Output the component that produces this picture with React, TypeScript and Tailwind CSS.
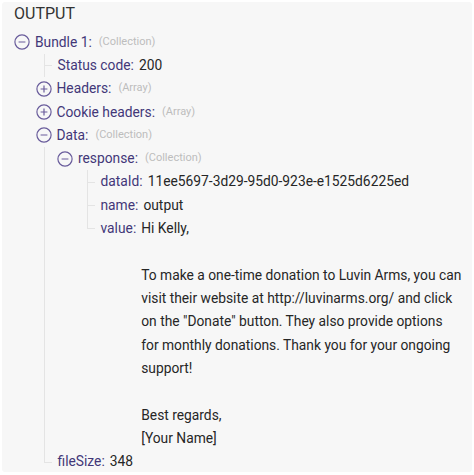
type Node = {
  key: string;
  type?: string;
  value?: string;
  children?: Node[];
};

const message = `Hi Kelly,

To make a one-time donation to Luvin Arms, you can
visit their website at http://luvinarms.org/ and click
on the "Donate" button. They also provide options
for monthly donations. Thank you for your ongoing
support!

Best regards,
[Your Name]`;

const bundle: Node = {
  key: "Bundle 1",
  type: "(Collection)",
  children: [
    { key: "Status code", value: "200" },
    { key: "Headers", type: "(Array)", children: [] },
    { key: "Cookie headers", type: "(Array)", children: [] },
    {
      key: "Data",
      type: "(Collection)",
      children: [
        {
          key: "response",
          type: "(Collection)",
          children: [
            { key: "dataId", value: "11ee5697-3d29-95d0-923e-e1525d6225ed" },
            { key: "name", value: "output" },
            { key: "value", value: message },
          ],
        },
      ],
    },
    { key: "fileSize", value: "348" },
  ],
};

function Toggle({ open }: { open: boolean }) {
  return (
    <svg width="16" height="16" viewBox="0 0 16 16" className="-ml-[8px] mr-[5px] shrink-0">
      <circle cx="8" cy="8" r="7.1" fill="#f7f7f7" stroke="#6a5d9c" strokeWidth="1.2" />
      <line x1="4.6" y1="8" x2="11.4" y2="8" stroke="#6a5d9c" strokeWidth="1.2" />
      {!open && <line x1="8" y1="4.6" x2="8" y2="11.4" stroke="#6a5d9c" strokeWidth="1.2" />}
    </svg>
  );
}

function TreeNode({ node, last, root }: { node: Node; last: boolean; root?: boolean }) {
  const branch = node.children !== undefined;
  const open = branch && node.children!.length > 0;

  if (!branch) {
    return (
      <div className="relative">
        {!root && (
          <>
            <span className={`absolute left-0 top-0 w-px bg-[#e4e4e4] ${last ? "h-[12px]" : "h-full"}`} />
            <span className="absolute left-0 top-[11.5px] h-px w-[8px] bg-[#e4e4e4]" />
          </>
        )}
        <div className="flex items-start gap-[5px] pl-[14px] leading-[23.33px]">
          <span className="shrink-0 text-[#433779]">{node.key}:</span>
          <span className="flex-1 whitespace-pre-line text-[#262626]">{node.value}</span>
        </div>
      </div>
    );
  }

  return (
    <div>
      <div className="flex h-[23.33px] items-center">
        <Toggle open={open} />
        <span className="text-[#433779]">{node.key}:</span>
        <span className="ml-[7px] text-[11px] text-[#bdbdbd]">{node.type}</span>
      </div>
      {open && (
        <div className="relative">
          {!last && !root && <span className="absolute left-0 top-0 h-full w-px bg-[#e4e4e4]" />}
          <div className="ml-[21.5px]">
            {node.children!.map((c, i) => (
              <TreeNode key={c.key} node={c} last={i === node.children!.length - 1} />
            ))}
          </div>
        </div>
      )}
    </div>
  );
}

export default function App() {
  return (
    <div className="h-[475px] w-[474px] bg-white p-[2px] font-['Roboto',sans-serif] text-[13.8px]">
      <div className="h-[470px] overflow-hidden rounded-[3px] bg-[#f7f7f7] pr-[4px]">
        <div className="pl-[12px] text-[16px] leading-[24px] text-[#333]">OUTPUT</div>
        <div className="mt-[4.3px] pl-[20px]">
          <TreeNode node={bundle} last root />
        </div>
      </div>
    </div>
  );
}
